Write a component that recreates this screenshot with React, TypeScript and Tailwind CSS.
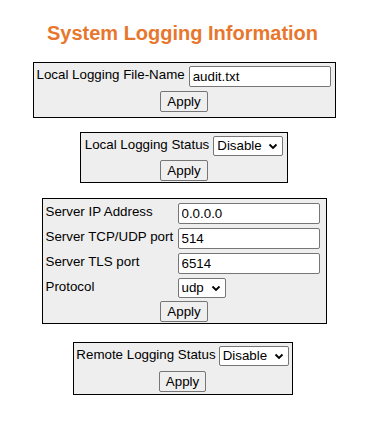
import React from 'react';

const font = { fontFamily: '"Liberation Sans", Arial, sans-serif' };

const Chevron: React.FC = () => (
  <svg width="10" height="7" viewBox="0 0 10 7" className="shrink-0">
    <path d="M1.5 1.5 L5 5 L8.5 1.5" fill="none" stroke="#000" strokeWidth="1.8" />
  </svg>
);

interface SelectBoxProps {
  value: string;
  options: string[];
  width: string;
}

const SelectBox: React.FC<SelectBoxProps> = ({ value, options, width }) => (
  <div className={`flex shrink-0 items-center h-[20px] border border-[#767676] rounded-[2px] bg-white pr-[4px] ${width}`}>
    <select
      defaultValue={value}
      className="appearance-none bg-transparent outline-none pl-[3px] text-[13.33px] leading-[18px] flex-1 min-w-0"
    >
      {options.map((o) => (
        <option key={o}>{o}</option>
      ))}
    </select>
    <Chevron />
  </div>
);

const TextBox: React.FC<{ value: string }> = ({ value }) => (
  <input
    type="text"
    defaultValue={value}
    className="w-[142px] shrink-0 h-[21px] border border-[#767676] rounded-[2px] bg-white px-[3px] text-[13.33px] outline-none"
  />
);

const ApplyButton: React.FC = () => (
  <button className="h-[21px] px-[6px] border border-[#767676] rounded-[2px] bg-[#efefef] text-[13.33px] leading-none">
    Apply
  </button>
);

export default function App() {
  return (
    <div className="w-[365px] min-h-[435px] bg-white text-black flex flex-col items-center text-[13.33px] whitespace-nowrap" style={font}>
      <h1 className="mt-[21px] text-[20px] font-bold text-[#e8772e] leading-[24px]">System Logging Information</h1>

      <div className="mt-[17px] ml-[3px] w-[303px] border border-black bg-[#eeeeee] px-[3px] pt-[3px] pb-[5px] flex flex-col items-center gap-[4px]">
        <div className="flex items-start gap-[4px] w-full">
          <span className="leading-[17px]">Local Logging File-Name</span>
          <TextBox value="audit.txt" />
        </div>
        <ApplyButton />
      </div>

      <div className="mt-[14px] ml-[3px] w-[208px] border border-black bg-[#eeeeee] px-[3px] pt-[3px] pb-[1px] flex flex-col items-center gap-[4px]">
        <div className="flex items-start gap-[4px]">
          <span className="leading-[17px]">Local Logging Status</span>
          <SelectBox value="Disable" options={['Disable', 'Enable']} width="w-[70px]" />
        </div>
        <ApplyButton />
      </div>

      <div className="mt-[15px] ml-[3px] w-[285px] border border-black bg-[#eeeeee] px-[3px] pt-[4px] pb-[1px] flex flex-col items-center gap-[3px]">
        <div className="grid grid-cols-[130px_142px] gap-x-[2px] gap-y-[4px] w-full">
          <span className="leading-[17px]">Server IP Address</span>
          <TextBox value="0.0.0.0" />
          <span className="leading-[17px]">Server TCP/UDP port</span>
          <TextBox value="514" />
          <span className="leading-[17px]">Server TLS port</span>
          <TextBox value="6514" />
          <span className="leading-[17px]">Protocol</span>
          <SelectBox value="udp" options={['udp', 'tcp', 'tls']} width="w-[48px]" />
        </div>
        <ApplyButton />
      </div>

      <div className="mt-[18px] w-[220px] border border-black bg-[#eeeeee] px-[2px] pt-[3px] pb-[2px] flex flex-col items-center gap-[5px]">
        <div className="flex items-start gap-[3px]">
          <span className="leading-[17px]">Remote Logging Status</span>
          <SelectBox value="Disable" options={['Disable', 'Enable']} width="w-[70px]" />
        </div>
        <ApplyButton />
      </div>
    </div>
  );
}
